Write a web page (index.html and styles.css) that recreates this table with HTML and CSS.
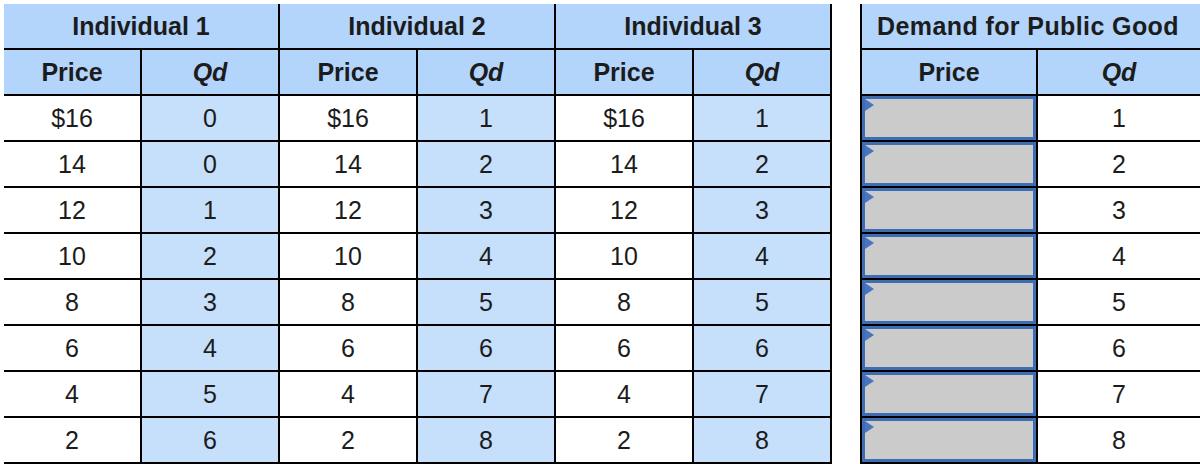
FILE: index.html
```html
<!DOCTYPE html>
<html lang="en">
<head>
<meta charset="utf-8">
<title>Public Good Demand</title>
<link rel="stylesheet" href="styles.css">
</head>
<body>
<div class="page">
  <div class="tbl tbl-ind">
    <div class="cell head span2">Individual 1</div>
    <div class="cell head span2">Individual 2</div>
    <div class="cell head span2">Individual 3</div>

    <div class="cell head">Price</div><div class="cell head qd">Qd</div>
    <div class="cell head">Price</div><div class="cell head qd">Qd</div>
    <div class="cell head">Price</div><div class="cell head qd">Qd</div>

    <div class="cell">$16</div><div class="cell q">0</div><div class="cell">$16</div><div class="cell q">1</div><div class="cell">$16</div><div class="cell q">1</div>
    <div class="cell">14</div><div class="cell q">0</div><div class="cell">14</div><div class="cell q">2</div><div class="cell">14</div><div class="cell q">2</div>
    <div class="cell">12</div><div class="cell q">1</div><div class="cell">12</div><div class="cell q">3</div><div class="cell">12</div><div class="cell q">3</div>
    <div class="cell">10</div><div class="cell q">2</div><div class="cell">10</div><div class="cell q">4</div><div class="cell">10</div><div class="cell q">4</div>
    <div class="cell">8</div><div class="cell q">3</div><div class="cell">8</div><div class="cell q">5</div><div class="cell">8</div><div class="cell q">5</div>
    <div class="cell">6</div><div class="cell q">4</div><div class="cell">6</div><div class="cell q">6</div><div class="cell">6</div><div class="cell q">6</div>
    <div class="cell">4</div><div class="cell q">5</div><div class="cell">4</div><div class="cell q">7</div><div class="cell">4</div><div class="cell q">7</div>
    <div class="cell">2</div><div class="cell q">6</div><div class="cell">2</div><div class="cell q">8</div><div class="cell">2</div><div class="cell q">8</div>
  </div>

  <div class="tbl tbl-pub">
    <div class="cell head span2 last wide">Demand for Public Good</div>
    <div class="cell head">Price</div><div class="cell head qd last">Qd</div>

    <div class="cell entry"><div class="input" aria-label="Price for Qd 1"></div></div><div class="cell last">1</div>
    <div class="cell entry"><div class="input" aria-label="Price for Qd 2"></div></div><div class="cell last">2</div>
    <div class="cell entry"><div class="input" aria-label="Price for Qd 3"></div></div><div class="cell last">3</div>
    <div class="cell entry"><div class="input" aria-label="Price for Qd 4"></div></div><div class="cell last">4</div>
    <div class="cell entry"><div class="input" aria-label="Price for Qd 5"></div></div><div class="cell last">5</div>
    <div class="cell entry"><div class="input" aria-label="Price for Qd 6"></div></div><div class="cell last">6</div>
    <div class="cell entry"><div class="input" aria-label="Price for Qd 7"></div></div><div class="cell last">7</div>
    <div class="cell entry"><div class="input" aria-label="Price for Qd 8"></div></div><div class="cell last">8</div>
  </div>
</div>
</body>
</html>
```

FILE: styles.css
```css
html, body {
  margin: 0;
  padding: 0;
  background: #ffffff;
  overflow: hidden;
}

.page {
  display: flex;
  align-items: flex-start;
  gap: 28px;
  padding: 4px 0 0 4px;
  font-family: "Liberation Sans", Arial, sans-serif;
  font-size: 25px;
  color: #1c1c1c;
}

.tbl {
  display: grid;
  grid-auto-rows: 46px;
}

.tbl-ind {
  grid-template-columns: repeat(6, 138px);
}

.tbl-pub {
  grid-template-columns: 176px 162px;
  border-left: 2px solid #000;
}

.cell {
  box-sizing: border-box;
  border-right: 2px solid #000;
  border-bottom: 2px solid #000;
  display: flex;
  align-items: center;
  justify-content: center;
  background: #ffffff;
  line-height: 1;
}

.cell.last {
  border-right: none;
}

.span2 {
  grid-column: span 2;
}

.head {
  background: #b3d4fb;
  font-weight: bold;
}

.head.wide {
  letter-spacing: 0.4px;
  padding-right: 6px;
}

.head.qd {
  font-style: italic;
}

.q {
  background: #c6dffb;
}

.entry {
  align-items: stretch;
  justify-content: stretch;
}

.input {
  position: relative;
  flex: 1;
  box-sizing: border-box;
  background: #cbcbcb;
  border: 3px solid #3f6db3;
}

.input::before {
  content: "";
  position: absolute;
  left: 0;
  top: 0;
  width: 0;
  height: 0;
  border-left: 9px solid #4775bf;
  border-top: 6px solid transparent;
  border-bottom: 6px solid transparent;
}
```
